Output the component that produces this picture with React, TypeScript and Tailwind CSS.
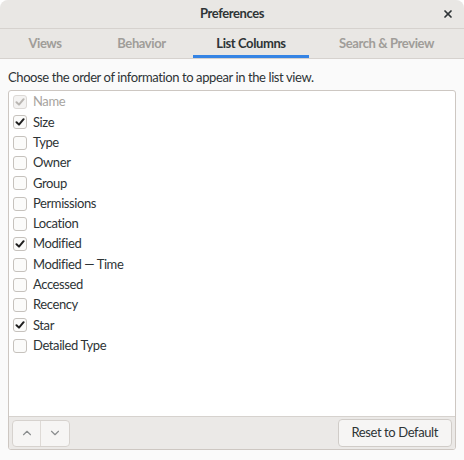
import { ChevronUp, ChevronDown, X } from 'lucide-react'

const COLUMNS = [
  { label: 'Name', checked: true, disabled: true },
  { label: 'Size', checked: true },
  { label: 'Type', checked: false },
  { label: 'Owner', checked: false },
  { label: 'Group', checked: false },
  { label: 'Permissions', checked: false },
  { label: 'Location', checked: false },
  { label: 'Modified', checked: true },
  { label: 'Modified — Time', checked: false },
  { label: 'Accessed', checked: false },
  { label: 'Recency', checked: false },
  { label: 'Star', checked: true },
  { label: 'Detailed Type', checked: false },
]

const TABS = [
  { label: 'Views', width: 'w-[90px]' },
  { label: 'Behavior', width: 'w-[103px]' },
  { label: 'List Columns', width: 'w-[116px]' },
  { label: 'Search & Preview', width: 'w-[155px]' },
]

function CheckBox({ checked, disabled }: { checked: boolean; disabled?: boolean }) {
  return (
    <span
      className={`flex h-[14px] w-[14px] items-center justify-center rounded-[3px] border ${
        disabled ? 'border-[#dcd9d6] bg-[#f4f3f2]' : 'border-[#c6c2bd] bg-[#fbfbfa]'
      }`}
    >
      {checked && (
        <svg width="10" height="10" viewBox="0 0 10 10">
          <path
            d="M1.5 5.2 L4 7.6 L8.6 2.2"
            fill="none"
            stroke={disabled ? '#b9b6b2' : '#1e1e1e'}
            strokeWidth="2"
            strokeLinecap="round"
            strokeLinejoin="round"
          />
        </svg>
      )}
    </span>
  )
}

export default function App() {
  return (
    <div
      className="flex h-[460px] w-[464px] flex-col overflow-hidden rounded-t-[8px] bg-[#fafafa] text-[13px] tracking-[-0.4px] text-[#2e3436]"
      style={{ fontFamily: 'Lato, "Noto Sans", sans-serif' }}
    >
      {/* Header bar */}
      <div className="relative flex h-[29px] items-center justify-center border-b border-[#d6d2ce] bg-[#e9e7e4]">
        <span className="font-bold text-[#2e3436]">Preferences</span>
        <X className="absolute right-[10px] top-[8px] h-[12px] w-[12px] text-[#2e3436]" strokeWidth={3.5} />
      </div>

      {/* Tabs */}
      <div className="flex h-[30px] border-b border-[#d6d2ce] bg-[#e9e7e4]">
        {TABS.map((tab) => {
          const active = tab.label === 'List Columns'
          return (
            <div key={tab.label} className={`relative flex items-center justify-center ${tab.width}`}>
              <span className={active ? 'font-bold text-[#2e3436]' : 'font-bold text-[#a09d99]'}>{tab.label}</span>
              {active && <div className="absolute inset-x-0 bottom-0 h-[3px] bg-[#3584e4]" />}
            </div>
          )
        })}
      </div>

      {/* Body */}
      <div className="flex flex-1 flex-col px-[8px] pt-[9px] pb-[10px]">
        <p className="mb-[4px] leading-[18px]">Choose the order of information to appear in the list view.</p>

        <div className="flex flex-1 flex-col overflow-hidden rounded-[3px] border border-[#cdc7c2] bg-white">
          <div className="flex flex-1 flex-col px-[4px] pt-[1px]">
            {COLUMNS.map((col) => (
              <div key={col.label} className="flex h-[20.3px] items-center gap-[6px]">
                <CheckBox checked={col.checked} disabled={col.disabled} />
                <span className={col.disabled ? 'text-[#a7a4a0]' : ''}>{col.label}</span>
              </div>
            ))}
          </div>

          {/* Toolbar */}
          <div className="flex h-[33px] items-center justify-between border-t border-[#d6d2ce] bg-[#ebe9e7] px-[3px]">
            <div className="flex h-[27px] overflow-hidden rounded-[4px] border border-[#d6d2ce] bg-[#f6f5f4]">
              <button className="flex w-[28px] items-center justify-center border-r border-[#dedad6]">
                <ChevronUp className="h-[14px] w-[14px] text-[#8b8e8f]" strokeWidth={2} />
              </button>
              <button className="flex w-[28px] items-center justify-center">
                <ChevronDown className="h-[14px] w-[14px] text-[#8b8e8f]" strokeWidth={2} />
              </button>
            </div>
            <button className="h-[28px] rounded-[4px] border border-[#d0ccc8] bg-[#f6f5f4] px-[13px] text-[#2e3436]">
              Reset to Default
            </button>
          </div>
        </div>
      </div>
    </div>
  )
}
